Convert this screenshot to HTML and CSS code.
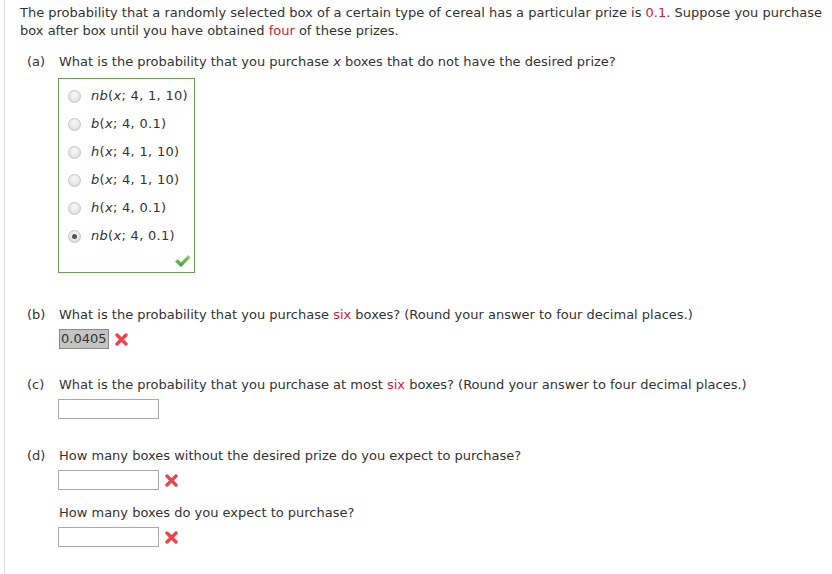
FILE: index.html
```html
<!DOCTYPE html>
<html>
<head>
<meta charset="utf-8">
<link rel="stylesheet" href="styles.css">
</head>
<body>
<div class="page">
  <p class="intro">The probability that a randomly selected box of a certain type of cereal has a particular prize is <span class="red">0.1</span>. Suppose you purchase box after box until you have obtained <span class="red">four</span> of these prizes.</p>

  <div class="part part-a">
    <span class="label">(a)</span>
    <div class="body">
      <div class="q">What is the probability that you purchase <i>x</i> boxes that do not have the desired prize?</div>
      <div class="choices">
        <div class="opt"><span class="radio"></span><span class="otext"><i>nb</i>(<i>x</i>; 4, 1, 10)</span></div>
        <div class="opt"><span class="radio"></span><span class="otext"><i>b</i>(<i>x</i>; 4, 0.1)</span></div>
        <div class="opt"><span class="radio"></span><span class="otext"><i>h</i>(<i>x</i>; 4, 1, 10)</span></div>
        <div class="opt"><span class="radio"></span><span class="otext"><i>b</i>(<i>x</i>; 4, 1, 10)</span></div>
        <div class="opt"><span class="radio"></span><span class="otext"><i>h</i>(<i>x</i>; 4, 0.1)</span></div>
        <div class="opt"><span class="radio checked"></span><span class="otext"><i>nb</i>(<i>x</i>; 4, 0.1)</span></div>
        <div class="check-row">
          <svg class="check" width="17" height="14" viewBox="0 0 17 14"><defs><linearGradient id="g" x1="0" y1="0" x2="0" y2="1"><stop offset="0" stop-color="#8fd66f"/><stop offset="1" stop-color="#3f9a35"/></linearGradient></defs><path d="M1 7.5 L4 5 L7 8.5 L14 1 L16.5 3.5 L7 13 Z" fill="url(#g)"/></svg>
        </div>
      </div>
    </div>
  </div>

  <div class="part part-b">
    <span class="label">(b)</span>
    <div class="body">
      <div class="q">What is the probability that you purchase <span class="red">six</span> boxes? (Round your answer to four decimal places.)</div>
      <div class="ans"><span class="filled">0.0405</span><svg class="x" width="13" height="13" viewBox="0 0 13 13"><path d="M2 2 L11 11 M11 2 L2 11" stroke="#e8464e" stroke-width="3.4" stroke-linecap="round"/></svg></div>
    </div>
  </div>

  <div class="part part-c">
    <span class="label">(c)</span>
    <div class="body">
      <div class="q">What is the probability that you purchase at most <span class="red">six</span> boxes? (Round your answer to four decimal places.)</div>
      <div class="ans"><span class="field"></span></div>
    </div>
  </div>

  <div class="part part-d">
    <span class="label">(d)</span>
    <div class="body">
      <div class="q">How many boxes without the desired prize do you expect to purchase?</div>
      <div class="ans"><span class="field"></span><svg class="x" width="13" height="13" viewBox="0 0 13 13"><path d="M2 2 L11 11 M11 2 L2 11" stroke="#e8464e" stroke-width="3.4" stroke-linecap="round"/></svg></div>
      <div class="q q2">How many boxes do you expect to purchase?</div>
      <div class="ans"><span class="field"></span><svg class="x" width="13" height="13" viewBox="0 0 13 13"><path d="M2 2 L11 11 M11 2 L2 11" stroke="#e8464e" stroke-width="3.4" stroke-linecap="round"/></svg></div>
    </div>
  </div>
</div>
</body>
</html>
```

FILE: styles.css
```css
html, body {
  margin: 0;
  padding: 0;
  background: #fff;
}
.page {
  margin-left: 4px;
  border-left: 1px solid #dcdcdc;
  min-height: 574px;
  box-sizing: border-box;
  padding: 4px 0 0 15px;
  font-family: "DejaVu Sans", Verdana, sans-serif;
  font-size: 13px;
  line-height: 18px;
  color: #333;
}
.intro {
  margin: 0;
}
.red {
  color: #d0213a;
}
.part {
  display: flex;
  padding-left: 7px;
}
.label {
  width: 32px;
  flex: none;
}
.body {
  flex: 1;
}
.part-a { margin-top: 13px; }
.part-b { margin-top: 33px; }
.part-c { margin-top: 27px; }
.part-d { margin-top: 28px; }

.choices {
  margin-top: 7px;
  width: 137px;
  border: 1px solid #6f9e52;
  padding-top: 3px;
  box-sizing: border-box;
  margin-left: -1px;
}
.opt {
  height: 28px;
  display: flex;
  align-items: center;
  padding-left: 9px;
}
.otext {
  letter-spacing: 0.3px;
}
.radio {
  width: 11px;
  height: 11px;
  border: 1px solid #c4c4c4;
  border-radius: 50%;
  background: radial-gradient(circle at 50% 35%, #fafafa 0%, #e2e2e2 70%, #d2d2d2 100%);
  margin-right: 10px;
  position: relative;
  flex: none;
}
.radio.checked::after {
  content: "";
  position: absolute;
  left: 3px;
  top: 3px;
  width: 5px;
  height: 5px;
  border-radius: 50%;
  background: #555;
}
.check-row {
  height: 22px;
  display: flex;
  justify-content: flex-end;
  align-items: flex-start;
  padding-right: 3px;
  padding-top: 4px;
  box-sizing: border-box;
}
.ans {
  display: flex;
  align-items: center;
  margin-top: 5px;
  height: 20px;
}
.filled {
  height: 18px;
  line-height: 18px;
  background: #c3c3c3;
  border: 1px solid #8a8a8a;
  padding: 0 1px 0 1px;
  color: #333;
}
.field {
  width: 99px;
  height: 18px;
  border: 1px solid #a9a9a9;
  background: #fff;
  margin-left: -1px;
}
.x {
  margin-left: 6px;
}
.q2 {
  margin-top: 14px;
}
```
